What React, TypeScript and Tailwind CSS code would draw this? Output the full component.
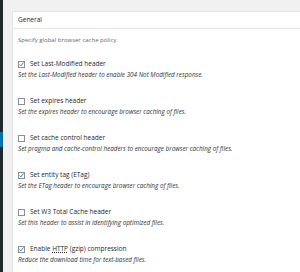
import React from "react";

const rows = [
  { label: "Set Last-Modified header", desc: "Set the Last-Modified header to enable 304 Not Modified response.", checked: true },
  { label: "Set expires header", desc: "Set the expires header to encourage browser caching of files.", checked: false },
  { label: "Set cache control header", desc: "Set pragma and cache-control headers to encourage browser caching of files.", checked: false },
  { label: "Set entity tag (ETag)", desc: "Set the ETag header to encourage browser caching of files.", checked: true },
  { label: "Set W3 Total Cache header", desc: "Set this header to assist in identifying optimized files.", checked: false },
  { label: "HTTP", desc: "Reduce the download time for text-based files.", checked: true },
];

function Box({ checked }: { checked: boolean }) {
  return (
    <span className="w-[7px] h-[7px] border border-[#8c8f94] bg-white flex items-center justify-center shrink-0">
      {checked && (
        <svg width="7" height="7" viewBox="0 0 7 7">
          <path d="M0.8 3.4 L2.7 5.4 L6.3 0.6" fill="none" stroke="#2271b1" strokeWidth="1.2" />
        </svg>
      )}
    </span>
  );
}

export default function App() {
  return (
    <div
      className="w-[300px] h-[272px] bg-[#f1f1f1] flex overflow-hidden"
      style={{ fontFamily: '"Open Sans", "Noto Sans", sans-serif' }}
    >
      <div className="w-[3px] flex flex-col bg-[#23282d] shrink-0">
        <div className="h-[132px]" />
        <div className="h-[15px] bg-[#0073aa]" />
      </div>
      <div className="flex-1 pl-[9px] pt-[11px]">
        <div className="bg-white border-t border-l border-[#e5e5e5] h-full">
          <div className="h-[17px] flex items-center pl-[5px] text-[6.5px] text-[#23282d] border-b border-[#e5e5e5]">
            General
          </div>
          <div className="pl-[5px] pt-[6px]">
            <div className="h-[10px] flex items-center text-[6px] text-[#646970]">
              Specify global browser cache policy.
            </div>
            <div className="flex flex-col gap-[16px] mt-[14px]">
              {rows.map((r, i) => (
                <div key={i} className="flex flex-col gap-[1px]">
                  <div className="h-[10px] flex items-center gap-[5px] text-[6.5px] text-[#23282d]">
                    <Box checked={r.checked} />
                    {r.label === "HTTP" ? (
                      <span>
                        Enable <abbr className="underline decoration-dotted">HTTP</abbr> (gzip) compression
                      </span>
                    ) : (
                      <span>{r.label}</span>
                    )}
                  </div>
                  <div className="h-[10px] flex items-center text-[6.3px] italic text-[#2c3338] whitespace-nowrap">
                    {r.desc}
                  </div>
                </div>
              ))}
            </div>
          </div>
        </div>
      </div>
    </div>
  );
}
